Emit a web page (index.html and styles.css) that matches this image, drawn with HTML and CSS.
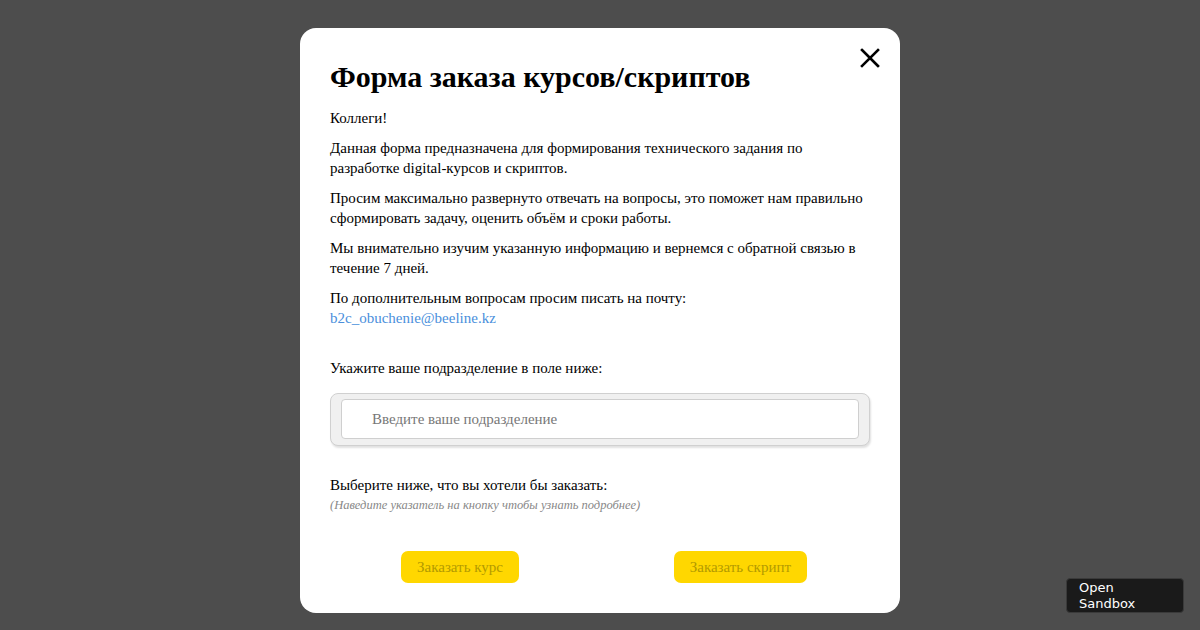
FILE: index.html
```html
<!DOCTYPE html>
<html lang="ru">
<head>
<meta charset="utf-8">
<link rel="stylesheet" href="styles.css">
</head>
<body>
<div class="overlay">
  <div class="modal">
    <button class="close" aria-label="Закрыть">
      <svg width="20" height="20" viewBox="0 0 20 20"><path d="M2 2 L18 18 M18 2 L2 18" stroke="#000" stroke-width="2.6" stroke-linecap="square"/></svg>
    </button>
    <h1 class="title">Форма заказа курсов/скриптов</h1>
    <p class="txt">Коллеги!</p>
    <p class="txt">Данная форма предназначена для формирования технического задания по разработке digital-курсов и скриптов.</p>
    <p class="txt">Просим максимально развернуто отвечать на вопросы, это поможет нам правильно сформировать задачу, оценить объём и сроки работы.</p>
    <p class="txt">Мы внимательно изучим указанную информацию и вернемся с обратной связью в течение 7 дней.</p>
    <p class="txt">По дополнительным вопросам просим писать на почту:<br><a class="mail" href="#">b2c_obuchenie@beeline.kz</a></p>
    <p class="label">Укажите ваше подразделение в поле ниже:</p>
    <div class="field">
      <input class="input" type="text" placeholder="Введите ваше подразделение">
    </div>
    <p class="label2">Выберите ниже, что вы хотели бы заказать:</p>
    <p class="hint">(Наведите указатель на кнопку чтобы узнать подробнее)</p>
    <div class="actions">
      <button class="btn">Заказать курс</button>
      <button class="btn">Заказать скрипт</button>
    </div>
  </div>
</div>
<div class="sandbox">Open Sandbox</div>
</body>
</html>
```

FILE: styles.css
```css
html, body {
  margin: 0;
  padding: 0;
  height: 100%;
}
body {
  background: #4d4d4d;
  font-family: "Liberation Serif", "Times New Roman", serif;
  font-size: 15px;
  color: #000;
  overflow: hidden;
}
.overlay {
  display: flex;
  justify-content: center;
  padding-top: 28px;
}
.modal {
  position: relative;
  width: 540px;
  background: #fff;
  border-radius: 16px;
  padding: 32px 30px 30px;
}
.close {
  position: absolute;
  top: 20px;
  right: 20px;
  width: 20px;
  height: 20px;
  padding: 0;
  border: 0;
  background: none;
  display: flex;
}
.title {
  margin: 0 0 14px;
  font-size: 30px;
  font-weight: bold;
  line-height: normal;
}
.txt {
  margin: 0 0 10px;
  line-height: 20px;
}
.mail {
  color: #4a8fdc;
  text-decoration: none;
}
.label {
  margin: 30px 0 15px;
  line-height: 20px;
}
.field {
  background: #f0f0f0;
  border: 1px solid #d0d0d0;
  border-radius: 8px;
  padding: 5px 10px 6px;
  box-shadow: 1px 2px 2px rgba(0,0,0,0.12);
}
.input {
  display: block;
  width: 100%;
  box-sizing: border-box;
  height: 40px;
  border: 1px solid #cfcfcf;
  border-radius: 4px;
  background: #fff;
  padding: 0 0 0 30px;
  font-family: inherit;
  font-size: 15px;
  color: #333;
  outline: none;
}
.input::placeholder {
  color: #777;
}
.label2 {
  margin: 29px 0 0;
  line-height: 20px;
}
.hint {
  margin: 1px 0 0;
  font-size: 12.5px;
  font-style: italic;
  color: #888;
  line-height: 18px;
}
.actions {
  display: flex;
  justify-content: space-between;
  padding: 0 63px 0 71px;
  margin-top: 37px;
}
.btn {
  height: 32px;
  border: 0;
  border-radius: 7px;
  background: #ffd700;
  color: #b39a00;
  font-family: inherit;
  font-size: 15px;
  padding: 0 16px;
}
.sandbox {
  position: fixed;
  right: 16px;
  bottom: 17px;
  width: 92px;
  padding: 1px 12px 0;
  background: #1a1a1a;
  border: 1px solid #3a3a3a;
  border-radius: 4px;
  color: #fff;
  font-family: "DejaVu Sans", sans-serif;
  font-size: 13px;
  line-height: 16px;
}
```
